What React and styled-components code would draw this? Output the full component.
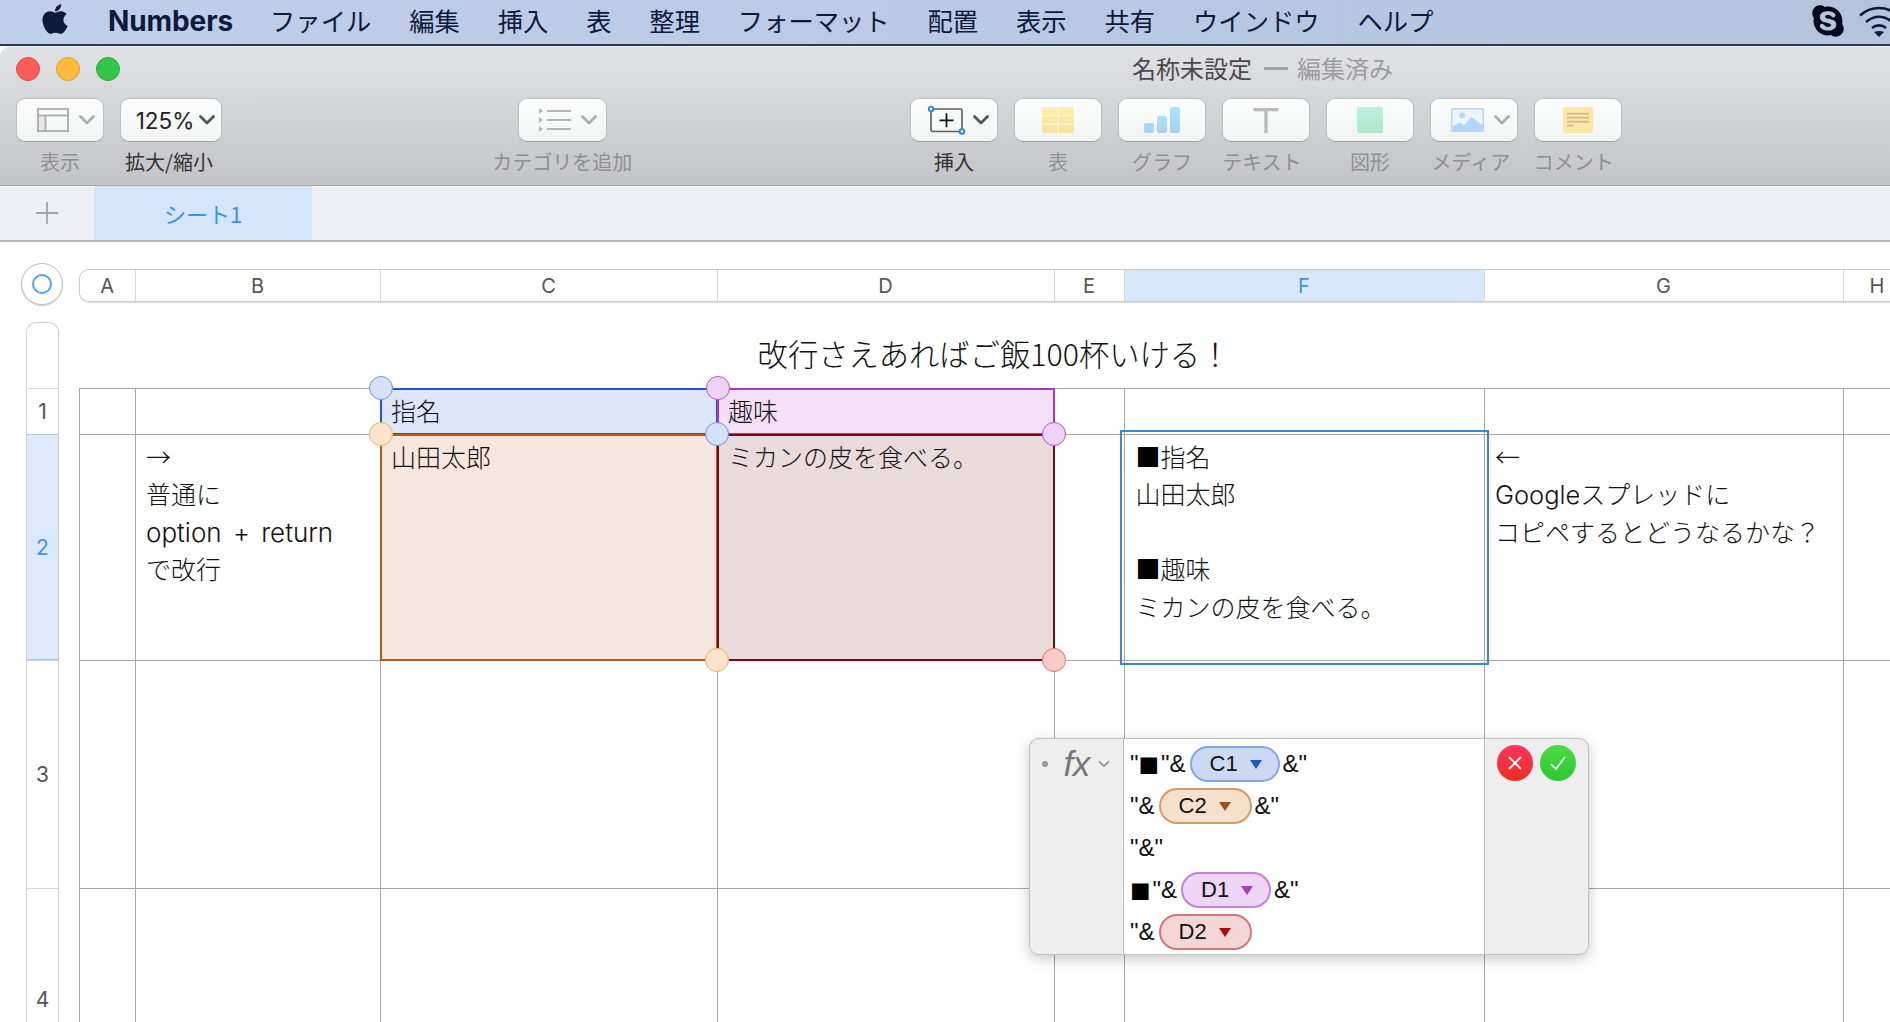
import React from "react";
import styled, { createGlobalStyle } from "styled-components";
import { FaApple, FaSkype } from "react-icons/fa";

const sans = `Inter, "Noto Sans CJK JP", sans-serif`;
const cjk = `"Noto Sans CJK JP", Inter, sans-serif`;

const Global = createGlobalStyle`
  html, body { margin: 0; padding: 0; background: #fff; overflow: hidden; }
  * { box-sizing: border-box; }
`;

const Page = styled.div`
  width: 1890px; height: 1022px; overflow: hidden; background: #fff;
  font-family: ${sans}; position: relative;
`;

/* Menu bar */
const MenuBar = styled.div`
  height: 46px; display: flex; align-items: center; padding: 0 0 2px 42px;
  background: linear-gradient(90deg, #bfcee9 0%, #b9c8e3 60%, #b4c4dd 100%);
  border-bottom: 2px solid #2b3a5c; color: #0c1b3a;
`;
const AppleIcon = styled(FaApple)`
  width: 32px; height: 34px; margin: -4px 0 0 -3px; color: #0c1b3a; flex: none;
`;
const AppName = styled.span`
  font-family: ${sans}; font-weight: 700; font-size: 28px; margin-left: 37px; margin-right: 37px; letter-spacing: -0.1px;
`;
const MenuItems = styled.div`display: flex; gap: 37.9px;`;
const MenuItem = styled.span`
  font-family: ${cjk}; font-size: 25.3px; font-weight: 400; line-height: 1; white-space: nowrap;
`;
const StatusIcons = styled.div`
  margin-left: auto; margin-right: -10px; display: flex; align-items: center; gap: 12px;
`;
const SkypeIcon = styled(FaSkype)`width: 36px; height: 36px; color: #020a1e;`;

/* Window chrome */
const Chrome = styled.div`
  height: 140px; background: linear-gradient(180deg, #e1e2e5 0%, #c3c4c7 100%);
  border-top: 1px solid #eeeef0; border-bottom: 1px solid #a9a9ab;
  border-top-left-radius: 10px; position: relative;
`;
const TitleBar = styled.div`
  height: 50.7px; display: flex; align-items: center; padding-left: 16px;
`;
const Lights = styled.div`display: flex; gap: 16px; margin-top: -7px;`;
const Light = styled.span`
  width: 24px; height: 24px; border-radius: 50%;
  background: ${p => p.$bg}; border: 1px solid ${p => p.$edge};
`;
const WindowTitle = styled.div`
  margin-left: 1012px; margin-top: -10px; font-family: ${cjk}; font-size: 24px; color: #4a4a4c; white-space: nowrap;
  display: flex; align-items: center;
`;
const TitleDash = styled.span`
  width: 24px; height: 2.5px; background: #a3a3a5; margin: 2px 9px 0 12px;
`;
const TitleMuted = styled.span`color: #9d9d9f;`;
const Toolbar = styled.div`display: flex; padding-left: 15.7px;`;
const ToolGroup = styled.div`
  display: flex; gap: 15.4px; margin-left: ${p => p.$ml || 0}px;
`;
const ToolItem = styled.div`
  display: flex; flex-direction: column; align-items: center; width: ${p => p.$w || 88.6}px;
`;
const ToolButton = styled.div`
  width: 100%; height: 44.8px; border-radius: 9px; display: flex; align-items: center;
  justify-content: ${p => (p.$pl != null ? "flex-start" : "center")};
  padding-left: ${p => p.$pl ?? 0}px; gap: ${p => p.$gap ?? 10}px;
  background: linear-gradient(180deg, #fcfcfc 0%, #f2f4f4 100%);
  border: 1px solid #bcbdc0; border-bottom-color: #a2a2a4;
`;
const ToolLabel = styled.span`
  margin-top: 6px; margin-right: ${p => (p.$dx || 0) * 2}px; font-family: ${cjk}; font-size: 20px; line-height: 28px; white-space: nowrap;
  color: ${p => (p.$dark ? "#333" : "#8f8f91")};
`;
const ZoomText = styled.span`font-family: ${sans}; font-size: 22.5px; color: #222;`;

/* Tabs */
const TabBar = styled.div`
  height: 56px; background: #eff0f5; border-bottom: 2px solid #b3b4b9; display: flex;
`;
const AddSheet = styled.div`width: 94px; display: flex; align-items: center; justify-content: center;`;
const Tab = styled.div`
  width: 218px; background: #d5e5fb; color: #3c92ee; display: flex; align-items: center; justify-content: center;
  font-family: ${cjk}; font-size: 22px;
`;

/* Sheet */
const Sheet = styled.div`padding-top: 21px;`;
const HeaderRow = styled.div`display: flex; align-items: center; padding-left: 21px;`;
const CornerButton = styled.div`
  width: 42px; height: 42px; border-radius: 50%; border: 1px solid #bbb; box-shadow: 0 1px 1px #ccc;
  display: flex; align-items: center; justify-content: center; flex: none; margin-right: 16px;
`;
const CornerRing = styled.span`
  width: 20px; height: 20px; border-radius: 50%; border: 2px solid #4aa3f5;
`;
const ColumnBar = styled.div`
  display: flex; height: 33px; flex: none; margin-top: 3px; border: 1px solid #cbcbcb; border-right: none; border-top-left-radius: 10px; border-bottom-left-radius: 10px;
  box-shadow: 0 1px 1px #ddd; overflow: hidden;
`;
const ColumnHead = styled.div`
  width: ${p => p.$w}px; flex: none; display: flex; align-items: center; justify-content: center;
  font-size: 20px; color: ${p => (p.$on ? "#3f8fe8" : "#555")}; background: ${p => (p.$on ? "#d8e8fc" : "#fff")};
  border-right: 1px solid #d6d6d6;
`;
const Body = styled.div`display: flex; margin-top: 17px;`;
const RowRail = styled.div`
  width: 33px; margin-left: 26px; margin-right: 21px; flex: none; display: flex; flex-direction: column;
  border: 1px solid #cfcfcf; border-bottom: none; border-top-left-radius: 10px; border-top-right-radius: 10px;
  overflow: hidden;
`;
const RailSpacer = styled.div`height: 65px; flex: none;`;
const RowHead = styled.div`
  height: ${p => p.$h}px; flex: none; display: flex; align-items: center; justify-content: center;
  font-size: 21px; color: ${p => (p.$on ? "#3f94ee" : "#555")}; background: ${p => (p.$on ? "#dceafc" : "#fff")};
  border-top: 1px solid ${p => (p.$on ? "#a9c3e3" : "#d6d6d6")};
  border-bottom: ${p => (p.$on ? "1px solid #a9c3e3" : "none")};
`;
const TableArea = styled.div`flex: none; width: 1828px;`;
const TableTitle = styled.div`
  height: 66px; display: flex; align-items: center; justify-content: center; padding-bottom: 5px;
  font-family: ${cjk}; font-size: 30.3px; font-weight: 300; color: #111;
`;
const Table = styled.div`
  display: grid; position: relative; margin-left: -1px;
  grid-template-columns: 56px 245px 337px 337px 70px 360px 359px 57px;
  grid-template-rows: 46px 226px 228px 228px;
  border-top: 1px solid #a8a8a8; border-left: 1px solid #a8a8a8;
`;
const Cell = styled.div`
  position: relative; border-right: 1px solid #a8a8a8; border-bottom: 1px solid #a8a8a8;
  padding: ${p => p.$pt ?? 3}px 8px 0 ${p => p.$pl ?? 10}px;
  font-family: ${cjk}; font-size: 25px; font-weight: 300; line-height: 37.4px; color: #111; white-space: pre;
  background: ${p => p.$fill || "transparent"};
  &::after {
    content: ${p => (p.$edge ? '""' : "none")}; position: absolute; inset: -1px;
    border: 2px solid ${p => p.$edge}; pointer-events: none;
  }
`;
const Latin = styled.span`
  font-family: ${sans}; font-size: ${p => p.$size || 25.5}px; line-height: 1; word-spacing: ${p => p.$ws || 0}px;
`;
const Block = styled.span`color: #000;`;
const Handle = styled.span`
  position: absolute; width: 24px; height: 24px; border-radius: 50%; z-index: 3;
  background: ${p => p.$fill}; border: 1.5px solid ${p => p.$edge};
  ${p => (p.$at === "tl" ? "left: -12.5px; top: -13px;" : "right: -12px; bottom: -12px;")}
`;
const Selection = styled.span`
  position: absolute; inset: -5px; border: 2px solid #3b87d3; z-index: 2; pointer-events: none;
`;

/* Formula editor */
const Formula = styled.div`
  position: absolute; left: 948.5px; top: 349px; width: 560px; height: 217px; display: flex; z-index: 5;
  background: #eee; border: 1px solid #c0c0c0; border-radius: 10px; overflow: hidden;
  box-shadow: 0 4px 14px rgba(0,0,0,.22);
`;
const FxPanel = styled.div`
  width: 93.5px; flex: none; display: flex; align-items: center; height: 50px; padding-left: 12px; color: #7a7a7a;
`;
const Dot = styled.span`width: 6px; height: 6px; border-radius: 50%; background: #999;`;
const FxText = styled.span`
  font-family: "Liberation Sans", sans-serif; font-style: italic; font-size: 35px; margin-left: 16px; color: #777; letter-spacing: -0.5px;
`;
const FxChevron = styled.svg`margin-left: 8px;`;
const FormulaBody = styled.div`
  width: 362px; flex: none; background: #fff; border-left: 1px solid #bcbcbc; border-right: 1px solid #bcbcbc;
  padding: 4px 0 0 6px; display: flex; flex-direction: column;
`;
const FormulaLine = styled.div`
  height: 42px; display: flex; align-items: center; font-family: "Liberation Sans", sans-serif; font-size: 24px; color: #111; white-space: nowrap;
`;
const FormulaSquare = styled.span`font-size: 34px; line-height: 0; color: #000; margin-right: 2px;`;
const Pill = styled.span`
  width: ${p => p.$w}px; height: 36px; margin: 0 3px 0 4px; border-radius: 18px; border: 2px solid ${p => p.$edge}; background: ${p => p.$fill};
  display: inline-flex; align-items: center; gap: 12px; padding-left: 18px; font-size: 22px;
`;
const PillArrow = styled.span`
  width: 0; height: 0; border-left: 6px solid transparent; border-right: 6px solid transparent; border-top: 9px solid ${p => p.$c};
`;
const Actions = styled.div`display: flex; gap: 7px; padding: 6px 0 0 12px;`;
const RoundAction = styled.span`
  width: 36px; height: 36px; border-radius: 50%; display: flex; align-items: center; justify-content: center;
  background: ${p => p.$bg};
`;

const Chevron = ({ c = "#adadad" }) => (
  <svg width="16" height="10" viewBox="0 0 16 10" fill="none">
    <path d="M1.5 1.5 8 8 14.5 1.5" stroke={c} strokeWidth="2.8" strokeLinecap="round" strokeLinejoin="round" />
  </svg>
);

const ViewIcon = () => (
  <svg width="32" height="24" viewBox="0 0 32 24" fill="none">
    <rect x="1" y="7" width="7" height="16" fill="#e9e9e9" />
    <rect x="1" y="1" width="30" height="22" stroke="#b0b0b0" strokeWidth="2" />
    <path d="M1 7.5H31M8.5 7.5V23" stroke="#b0b0b0" strokeWidth="2" />
  </svg>
);

const CategoryIcon = () => (
  <svg width="32" height="24" viewBox="0 0 32 24" fill="none">
    <path d="M0 0 4 3 0 6ZM0 9 4 12 0 15ZM0 18 4 21 0 24Z" fill="#b5b5b5" />
    <path d="M8 3H32M8 12H32M8 21H32" stroke="#b5b5b5" strokeWidth="2" />
  </svg>
);

const InsertIcon = () => (
  <svg width="38" height="30" viewBox="0 0 38 30" fill="none">
    <rect x="3" y="4" width="31" height="22.5" rx="1.5" stroke="#5d5d5d" strokeWidth="1.6" />
    <path d="M11.5 15.3H25.5M18.5 8.3V22.3" stroke="#111" strokeWidth="1.7" />
    <circle cx="3" cy="4" r="2.3" fill="#fff" stroke="#1e83f0" strokeWidth="1.8" />
    <circle cx="34" cy="26.5" r="2.3" fill="#fff" stroke="#1e83f0" strokeWidth="1.8" />
  </svg>
);

const TableIcon = () => (
  <svg width="32" height="26" viewBox="0 0 32 26" fill="none">
    <defs><linearGradient id="ty" x1="0" y1="0" x2="0" y2="1"><stop offset="0" stopColor="#fdf0a9" /><stop offset="1" stopColor="#f9dfa4" /></linearGradient></defs>
    <rect width="32" height="26" rx="2" fill="url(#ty)" />
    <path d="M0 8.6H32M0 17.2H32M16 0V26" stroke="#fbf4d8" strokeWidth="1.4" />
  </svg>
);

const ChartIcon = () => (
  <svg width="36" height="26" viewBox="0 0 36 26" fill="none">
    <defs><linearGradient id="tb" x1="0" y1="0" x2="0" y2="1"><stop offset="0" stopColor="#aae6f8" /><stop offset="1" stopColor="#a8cdf2" /></linearGradient></defs>
    <rect x="0" y="16" width="10" height="10" rx="2" fill="#a8d6f5" />
    <rect x="13" y="9" width="10" height="17" rx="2" fill="url(#tb)" />
    <rect x="26" y="0" width="10" height="26" rx="2" fill="url(#tb)" />
  </svg>
);

const TextIcon = () => (
  <svg width="26" height="25" viewBox="0 0 26 25" fill="none">
    <path d="M0.5 1.5H25.5M13 1.5V25" stroke="#bababa" strokeWidth="3.4" />
  </svg>
);

const ShapeIcon = () => (
  <svg width="26" height="26" viewBox="0 0 26 26" fill="none">
    <defs><linearGradient id="tg" x1="0" y1="0" x2="0" y2="1"><stop offset="0" stopColor="#bdefe0" /><stop offset="1" stopColor="#aeeaca" /></linearGradient></defs>
    <rect width="26" height="26" rx="2" fill="url(#tg)" />
  </svg>
);

const MediaIcon = () => (
  <svg width="33" height="24" viewBox="0 0 33 24" fill="none">
    <defs><linearGradient id="tm" x1="0" y1="0" x2="0" y2="1"><stop offset="0" stopColor="#eaf2fd" /><stop offset="1" stopColor="#f7f9fd" /></linearGradient></defs>
    <rect width="33" height="24" rx="1.5" fill="#b5d6fb" />
    <rect x="1.5" y="1.5" width="30" height="21" fill="url(#tm)" />
    <circle cx="11" cy="7.5" r="3" fill="#b5d6fb" />
    <path d="M1.5 18 8.5 14.5 13 17 20.5 9 31.5 17V24H1.5Z" fill="#b5d6fb" />
  </svg>
);

const NoteIcon = () => (
  <svg width="30" height="26" viewBox="0 0 30 26" fill="none">
    <rect width="30" height="26" rx="1.5" fill="#fbe8a4" />
    <path d="M4 6.7H26M4 10.7H26M4 14.7H26M4 18.7H11" stroke="#cfb98f" strokeWidth="1.7" />
  </svg>
);

const WifiIcon = () => (
  <svg width="42" height="32" viewBox="0 0 42 32" fill="none">
    <path d="M2 10.5C13 0.5 29 0.5 40 10.5" stroke="#0c1b3a" strokeWidth="2.6" />
    <path d="M8 17C16 10 26 10 34 17" stroke="#0c1b3a" strokeWidth="2.6" />
    <path d="M14 23C18 19.5 24 19.5 28 23" stroke="#0c1b3a" strokeWidth="2.6" />
    <path d="M21 32 16 27C19 25.5 23 25.5 26 27Z" fill="#0c1b3a" />
  </svg>
);

const PlusIcon = () => (
  <svg width="22" height="22" viewBox="0 0 22 22" fill="none">
    <path d="M0 11H22M11 0V22" stroke="#a4a4a8" strokeWidth="1.8" />
  </svg>
);

const menu = ["ファイル", "編集", "挿入", "表", "整理", "フォーマット", "配置", "表示", "共有", "ウインドウ", "ヘルプ"];
const columns = [["A", 55.5], ["B", 245], ["C", 337], ["D", 337], ["E", 70], ["F", 360, true], ["G", 359], ["H", 68]];

const tones = {
  blue: { fill: "#d4e1f7", edge: "#6f8eea" },
  orange: { fill: "#fbe3cd", edge: "#f7ab66" },
  purple: { fill: "#ecd3f7", edge: "#b551d6" },
  red: { fill: "#f9cccc", edge: "#f26a6a" },
};

const Dots = ({ list }) => list.map(([tone, at]) => (
  <Handle key={tone + at} $at={at} $fill={tones[tone].fill} $edge={tones[tone].edge} />
));

const Ref = ({ label, fill, edge, arrow, w = 90 }) => (
  <Pill $fill={fill} $edge={edge} $w={w}>
    {label}
    <PillArrow $c={arrow} />
  </Pill>
);

export default function App() {
  return (
    <Page>
      <Global />
      <MenuBar>
        <AppleIcon />
        <AppName>Numbers</AppName>
        <MenuItems>
          {menu.map(m => <MenuItem key={m}>{m}</MenuItem>)}
        </MenuItems>
        <StatusIcons>
          <SkypeIcon />
          <WifiIcon />
        </StatusIcons>
      </MenuBar>

      <Chrome>
        <TitleBar>
          <Lights>
            <Light $bg="#fc5d57" $edge="#e24b45" />
            <Light $bg="#fdbb3b" $edge="#e0a02e" />
            <Light $bg="#32c748" $edge="#2aad3c" />
          </Lights>
          <WindowTitle>名称未設定<TitleDash /><TitleMuted>編集済み</TitleMuted></WindowTitle>
        </TitleBar>
        <Toolbar>
          <ToolGroup>
            <ToolItem><ToolButton $pl={20}><ViewIcon /><Chevron /></ToolButton><ToolLabel>表示</ToolLabel></ToolItem>
            <ToolItem $w={102.6}><ToolButton $pl={15} $gap={5}><ZoomText>125%</ZoomText><Chevron c="#555" /></ToolButton><ToolLabel $dark $dx={2}>拡大/縮小</ToolLabel></ToolItem>
          </ToolGroup>
          <ToolGroup $ml={295.7}>
            <ToolItem><ToolButton $pl={20}><CategoryIcon /><Chevron /></ToolButton><ToolLabel>カテゴリを追加</ToolLabel></ToolItem>
          </ToolGroup>
          <ToolGroup $ml={303.1}>
            <ToolItem><ToolButton $pl={17} $gap={7}><InsertIcon /><Chevron c="#555" /></ToolButton><ToolLabel $dark>挿入</ToolLabel></ToolItem>
            <ToolItem><ToolButton><TableIcon /></ToolButton><ToolLabel>表</ToolLabel></ToolItem>
            <ToolItem><ToolButton><ChartIcon /></ToolButton><ToolLabel>グラフ</ToolLabel></ToolItem>
            <ToolItem><ToolButton><TextIcon /></ToolButton><ToolLabel $dx={4}>テキスト</ToolLabel></ToolItem>
            <ToolItem><ToolButton><ShapeIcon /></ToolButton><ToolLabel>図形</ToolLabel></ToolItem>
            <ToolItem><ToolButton $pl={20}><MediaIcon /><Chevron /></ToolButton><ToolLabel $dx={3}>メディア</ToolLabel></ToolItem>
            <ToolItem><ToolButton><NoteIcon /></ToolButton><ToolLabel $dx={4}>コメント</ToolLabel></ToolItem>
          </ToolGroup>
        </Toolbar>
      </Chrome>

      <TabBar>
        <AddSheet><PlusIcon /></AddSheet>
        <Tab>シート1</Tab>
      </TabBar>

      <Sheet>
        <HeaderRow>
          <CornerButton><CornerRing /></CornerButton>
          <ColumnBar>
            {columns.map(([l, w, on]) => <ColumnHead key={l} $w={w} $on={on}>{l}</ColumnHead>)}
          </ColumnBar>
        </HeaderRow>
        <Body>
          <RowRail>
            <RailSpacer />
            <RowHead $h={46}>1</RowHead>
            <RowHead $h={226} $on>2</RowHead>
            <RowHead $h={228}>3</RowHead>
            <RowHead $h={222}>4</RowHead>
          </RowRail>
          <TableArea>
            <TableTitle>改行さえあればご飯100杯いける！</TableTitle>
            <Table>
              <Cell />
              <Cell />
              <Cell $fill="#dde6f8" $edge="#1f56d8" $pt={3}>
                指名
                <Dots list={[["blue", "tl"], ["blue", "br"]]} />
              </Cell>
              <Cell $fill="#f3e0f7" $edge="#ab35ca" $pt={3}>
                趣味
                <Dots list={[["purple", "tl"], ["purple", "br"]]} />
              </Cell>
              <Cell />
              <Cell />
              <Cell />
              <Cell />

              <Cell />
              <Cell>→{"\n"}普通に{"\n"}<Latin $size={26} $ws={4}>option + return</Latin>{"\n"}で改行</Cell>
              <Cell $fill="#f5e6de" $edge="#b35a1a">
                山田太郎
                <Dots list={[["orange", "tl"], ["orange", "br"]]} />
              </Cell>
              <Cell $fill="#e9dadb" $edge="#7a0a14">
                ミカンの皮を食べる。
                <Dots list={[["red", "br"]]} />
              </Cell>
              <Cell />
              <Cell $pl={10.5}>
                <Selection />
                <Block>■</Block>指名{"\n"}山田太郎{"\n"}{"\n"}<Block>■</Block>趣味{"\n"}ミカンの皮を食べる。
              </Cell>
              <Cell>←{"\n"}<Latin>Google</Latin>スプレッドに{"\n"}コピペするとどうなるかな？</Cell>
              <Cell />

              {Array.from({ length: 16 }, (_, i) => <Cell key={i} />)}

              <Formula>
                <FxPanel>
                  <Dot />
                  <FxText>fx</FxText>
                  <FxChevron width="12" height="8" viewBox="0 0 12 8" fill="none">
                    <path d="M1 1.5 6 6 11 1.5" stroke="#8a8a8a" strokeWidth="1.6" />
                  </FxChevron>
                </FxPanel>
                <FormulaBody>
                  <FormulaLine>"<FormulaSquare>■</FormulaSquare>"&amp;<Ref label="C1" fill="#ccd9f2" edge="#82a6e6" arrow="#1f56c8" />&amp;"</FormulaLine>
                  <FormulaLine>"&amp;<Ref label="C2" w={93} fill="#f6e0cc" edge="#d69a62" arrow="#a04f14" />&amp;"</FormulaLine>
                  <FormulaLine>"&amp;"</FormulaLine>
                  <FormulaLine><FormulaSquare>■</FormulaSquare>"&amp;<Ref label="D1" fill="#eed4f5" edge="#c583dc" arrow="#a33fc2" />&amp;"</FormulaLine>
                  <FormulaLine>"&amp;<Ref label="D2" w={93} fill="#f5d6d6" edge="#cf7a78" arrow="#a80d14" /></FormulaLine>
                </FormulaBody>
                <Actions>
                  <RoundAction $bg="linear-gradient(180deg,#fb3560,#f02c20)">
                    <svg width="16" height="16" viewBox="0 0 16 16" fill="none"><path d="M2 2 14 14M14 2 2 14" stroke="#fff" strokeWidth="1.8" /></svg>
                  </RoundAction>
                  <RoundAction $bg="linear-gradient(180deg,#4cdc44,#2cc733)">
                    <svg width="18" height="16" viewBox="0 0 18 16" fill="none"><path d="M2 9 7 14 16 2" stroke="#fff" strokeWidth="1.7" /></svg>
                  </RoundAction>
                </Actions>
              </Formula>
            </Table>
          </TableArea>
        </Body>
      </Sheet>
    </Page>
  );
}
